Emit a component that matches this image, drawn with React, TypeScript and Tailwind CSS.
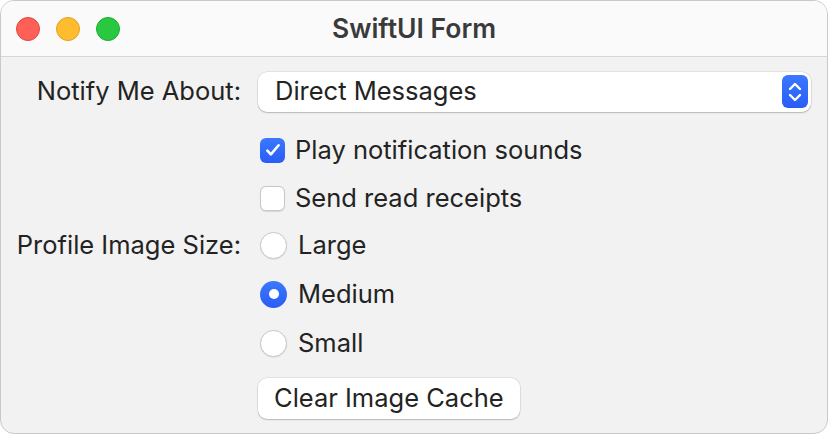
import React from "react";

function TrafficLights() {
  return (
    <div className="flex items-center gap-4">
      <span className="block h-6 w-6 rounded-full bg-[#fe5f57] border border-[#e2463f]" />
      <span className="block h-6 w-6 rounded-full bg-[#febc2e] border border-[#e0a027]" />
      <span className="block h-6 w-6 rounded-full bg-[#28c840] border border-[#1eaa30]" />
    </div>
  );
}

function Checkbox({ checked }: { checked: boolean }) {
  if (checked) {
    return (
      <span className="flex h-[25px] w-[25px] items-center justify-center rounded-[6px] bg-gradient-to-b from-[#3b78ff] to-[#2a5cf5]">
        <svg width="18" height="18" viewBox="0 0 16 16" fill="none">
          <path d="M3 8.6l3.1 3.3L13 3.8" stroke="white" strokeWidth="2.3" strokeLinecap="round" strokeLinejoin="round" />
        </svg>
      </span>
    );
  }
  return <span className="block h-[25px] w-[25px] rounded-[6px] border border-[#c8c8c8] bg-white shadow-[0_0.5px_1px_rgba(0,0,0,0.12)]" />;
}

function Radio({ checked }: { checked: boolean }) {
  if (checked) {
    return (
      <span className="flex h-[27px] w-[27px] items-center justify-center rounded-full bg-gradient-to-b from-[#3b78ff] to-[#2a5cf5]">
        <span className="block h-[10px] w-[10px] rounded-full bg-white" />
      </span>
    );
  }
  return <span className="block h-[27px] w-[27px] rounded-full border border-[#c8c8c8] bg-white shadow-[0_0.5px_1px_rgba(0,0,0,0.12)]" />;
}

export default function App() {
  const sizes = ["Large", "Medium", "Small"];

  return (
    <div
      className="h-[434px] w-[828px] overflow-hidden rounded-[14px] border border-[#c9c9c9] bg-[#f2f2f2] text-[25.5px] text-[#232323]"
      style={{ fontFamily: "Inter, 'Noto Sans', sans-serif" }}
    >
      {/* Title bar */}
      <div className="relative flex h-[56px] items-center border-b border-[#d6d6d6] bg-[#fafafa] pl-[15px]">
        <TrafficLights />
        <div className="absolute inset-0 flex items-center justify-center font-semibold text-[26.5px] text-[#3a3a3a]">
          SwiftUI Form
        </div>
      </div>

      {/* Form */}
      <div className="grid grid-cols-[240px_1fr] gap-x-[17px] pr-[16px] pt-[15px]">
        <div className="flex h-[40px] items-center justify-end pb-[1px]">Notify Me About:</div>
        <div className="flex h-[40px] items-center justify-between rounded-[9px] bg-white pb-[1px] pl-[17px] pr-[3px] shadow-[0_0_0_0.5px_rgba(0,0,0,0.12),0_1px_1.5px_rgba(0,0,0,0.2)]">
          <span>Direct Messages</span>
          <span className="flex h-[33px] w-[26px] items-center justify-center rounded-[6px] bg-gradient-to-b from-[#3b78ff] to-[#2a5cf5]">
            <svg width="16" height="26" viewBox="0 0 16 26" fill="none">
              <path d="M3 10l5-5 5 5M3 16l5 5 5-5" stroke="white" strokeWidth="2.4" strokeLinecap="round" strokeLinejoin="round" />
            </svg>
          </span>
        </div>

        <div />
        <div className="mt-[24px] flex h-[28px] items-center gap-[10px] pl-[2px]">
          <Checkbox checked />
          <span>Play notification sounds</span>
        </div>

        <div />
        <div className="mt-[20px] flex h-[28px] items-center gap-[10px] pl-[2px]">
          <Checkbox checked={false} />
          <span>Send read receipts</span>
        </div>

        {sizes.map((s, i) => (
          <React.Fragment key={s}>
            <div className="mt-[17px] flex h-[32px] items-center justify-end">
              {i === 0 ? "Profile Image Size:" : ""}
            </div>
            <div className="mt-[17px] flex h-[32px] items-center gap-[11px] pl-[2px]">
              <Radio checked={s === "Medium"} />
              <span>{s}</span>
            </div>
          </React.Fragment>
        ))}

        <div />
        <div className="mt-[19px]">
          <button className="h-[41px] rounded-[9px] bg-white px-[16px] shadow-[0_0_0_0.5px_rgba(0,0,0,0.12),0_1px_1.5px_rgba(0,0,0,0.2)]">
            Clear Image Cache
          </button>
        </div>
      </div>
    </div>
  );
}
